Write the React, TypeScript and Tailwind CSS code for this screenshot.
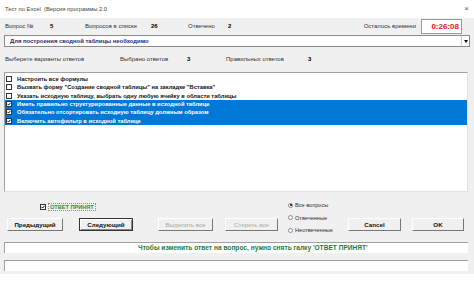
import React from "react";

const items = [
  { text: "Настроить все формулы", checked: false },
  { text: "Вызвать форму \"Создание сводной таблицы\" на закладке \"Вставка\"", checked: false },
  { text: "Указать исходную таблицу, выбрать одну любую ячейку в области таблицы", checked: false },
  { text: "Иметь правильно структурированные данные в исходной таблице", checked: true },
  { text: "Обязательно отсортировать исходную таблицу должным образом", checked: true },
  { text: "Включить автофильтр в исходной таблице", checked: true },
];

function Box({ checked, size = "w-[6px] h-[6px]" }: { checked: boolean; size?: string }) {
  return (
    <span className={`${size} shrink-0 bg-white border border-[#333] flex items-center justify-center`}>
      {checked && (
        <svg viewBox="0 0 6 6" className="w-full h-full">
          <path d="M0.8 2.8 L2.4 4.6 L5.2 1.2" fill="none" stroke="#000" strokeWidth="1.4" />
        </svg>
      )}
    </span>
  );
}

function Radio({ on, label }: { on?: boolean; label: string }) {
  return (
    <div className="h-[12.5px] flex items-center gap-[2px]">
      <span className="w-[5px] h-[5px] rounded-full bg-white border border-[#888] flex items-center justify-center">
        {on && <span className="w-[2px] h-[2px] rounded-full bg-black" />}
      </span>
      <span className="text-[5.6px] text-[#333]">{label}</span>
    </div>
  );
}

function Btn({ label, width, disabled, main }: { label: string; width: string; disabled?: boolean; main?: boolean }) {
  return (
    <div
      className={`${width} h-[13px] shrink-0 flex items-center justify-center bg-[#f0f0f0] text-[6.2px] font-bold border ${
        main
          ? "border-[#333] shadow-[inset_1px_1px_0_#fff,inset_-1px_-1px_0_#888]"
          : "border-t-white border-l-white border-b-[#777] border-r-[#777]"
      } ${disabled ? "text-[#a8a8a8] font-normal" : "text-[#111]"}`}
    >
      {label}
    </div>
  );
}

export default function App() {
  return (
    <div className="w-[474px] h-[292px] bg-white overflow-hidden font-['Liberation_Sans',Arial,sans-serif] text-[#333]">
      {/* title bar */}
      <div className="h-[18px] flex items-center justify-between pl-[5px] pr-[5px]">
        <span className="text-[5.8px] text-[#444]">Тест по Excel&nbsp;&nbsp;(Версия программы 2.0</span>
        <span className="text-[8px] text-[#555]">×</span>
      </div>

      <div className="bg-[#f0f0f0] h-[256px] pl-[4px] pr-[4px]">
        {/* row 1 */}
        <div className="h-[17px] flex items-center text-[6px]">
          <span className="w-[46px] pl-[1px]">Вопрос №</span>
          <span className="w-[35px] font-bold text-black">5</span>
          <span className="w-[66px]">Вопросов в списке</span>
          <span className="w-[37px] font-bold text-black">26</span>
          <span className="w-[40px]">Отвечено</span>
          <span className="font-bold text-black">2</span>
          <span className="ml-auto mr-[5px]">Осталось времени</span>
          <div className="w-[41px] h-[15px] mr-[8px] bg-white border border-[#999] flex items-center justify-end pr-[2px]">
            <span className="text-[8px] font-bold text-[#e8151b]">0:26:08</span>
          </div>
        </div>

        {/* combo */}
        <div className="h-[12px] bg-white border border-[#8a8a8a] flex items-center">
          <span className="flex-1 pl-[5px] text-[5.9px] font-bold text-[#1f2a7a]">
            Для построения сводной таблицы необходимо
          </span>
          <div className="w-[8px] h-full border-l border-[#cfcfcf] flex items-center justify-center">
            <span className="w-0 h-0 border-l-[2px] border-r-[2px] border-t-[3px] border-l-transparent border-r-transparent border-t-black" />
          </div>
        </div>

        {/* row 2 */}
        <div className="h-[25px] flex items-center text-[6px]">
          <span className="w-[116px] pl-[1px]">Выберете варианты ответов</span>
          <span className="w-[67px]">Выбрано ответов</span>
          <span className="w-[39px] font-bold text-black">3</span>
          <span className="w-[82px]">Правильных ответов</span>
          <span className="font-bold text-black">3</span>
        </div>

        {/* list */}
        <div className="w-[464px] h-[120px] bg-white border-t border-l border-t-[#a0a0a0] border-l-[#a0a0a0] border-b border-r border-b-[#e3e3e3] border-r-[#e3e3e3] pt-[2px]">
          {items.map((it) => (
            <div
              key={it.text}
              className={`h-[8.33px] flex items-center gap-[5px] pl-[1px] text-[5.75px] font-bold ${
                it.checked ? "bg-[#0078d7] text-white" : "text-[#111]"
              }`}
            >
              <Box checked={it.checked} />
              <span className="whitespace-nowrap">{it.text}</span>
            </div>
          ))}
        </div>

        {/* controls */}
        <div className="h-[49px] flex">
          <div className="w-[284px] pt-[11px]">
            <div className="h-[8px] flex items-center">
              <span className="ml-[36px]">
                <Box checked />
              </span>
              <span className="ml-[2px] px-[1px] h-[8px] flex items-center border border-dotted border-[#8a8a8a] text-[5.6px] font-bold text-[#2e8b3a]">
                ОТВЕТ ПРИНЯТ
              </span>
            </div>
            <div className="mt-[7px] flex">
              <span className="ml-[3px]">
                <Btn label="Предыдущий" width="w-[56px]" />
              </span>
              <span className="ml-[16px]">
                <Btn label="Следующий" width="w-[54px]" main />
              </span>
              <span className="ml-[25px]">
                <Btn label="Выделить все" width="w-[55px]" disabled />
              </span>
              <span className="ml-[12px]">
                <Btn label="Стереть все" width="w-[53px]" disabled />
              </span>
            </div>
          </div>
          <div className="w-[60px] pt-[7px]">
            <Radio on label="Все вопросы" />
            <Radio label="Отвеченные" />
            <Radio label="Неотвеченные" />
          </div>
          <div className="pt-[26px] flex">
            <Btn label="Cancel" width="w-[53px]" />
            <span className="ml-[11px]">
              <Btn label="OK" width="w-[52px]" />
            </span>
          </div>
        </div>

        {/* message */}
        <div className="mt-[1px] w-[464px] h-[11px] bg-white border-t border-l border-t-[#a0a0a0] border-l-[#a0a0a0] flex items-center pl-[133px]">
          <span className="text-[6.6px] font-bold text-[#1f7a3a] whitespace-nowrap">
            Чтобы изменить ответ на вопрос, нужно снять галку 'ОТВЕТ ПРИНЯТ'
          </span>
        </div>
        <div className="mt-[7px] w-[464px] h-[11px] bg-white border-t border-l border-t-[#a0a0a0] border-l-[#a0a0a0]" />
      </div>
    </div>
  );
}
